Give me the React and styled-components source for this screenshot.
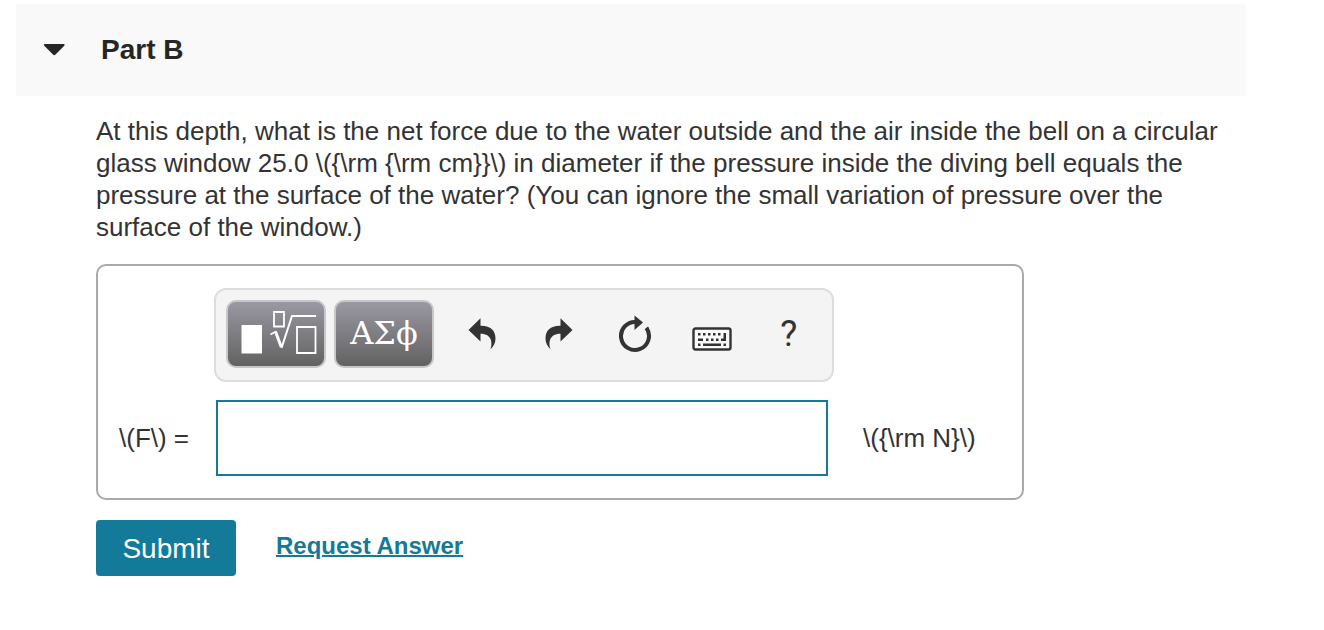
import { useId, useState } from "react";
import styled, { createGlobalStyle, css } from "styled-components";

const GlobalStyle = createGlobalStyle`
  *, *::before, *::after {
    box-sizing: border-box;
  }

  body {
    margin: 0;
    background: #fff;
    color: #333;
    font-family: "Liberation Sans", Helvetica, Arial, sans-serif;
    font-size: 26px;
    line-height: 32px;
  }

  button, input {
    font: inherit;
  }
`;

const UndoIcon = () => (
  <svg width="28" height="32" viewBox="0 0 28 32" aria-hidden="true">
    <path
      d="M0.5 12 12.5 0.3V7.8C22.5 7.5 27.5 12.5 27.5 20.5 27.5 25 25.5 28.5 22.5 31.3 24.5 25.5 24.3 15.8 12.5 15.8V23.5Z"
      fill="#333"
    />
  </svg>
);

const RedoIcon = () => (
  <svg width="28" height="32" viewBox="0 0 28 32" aria-hidden="true">
    <path
      d="M27.5 12 15.5 0.3V7.8C5.5 7.5 0.5 12.5 0.5 20.5 0.5 25 2.5 28.5 5.5 31.3 3.5 25.5 3.7 15.8 15.5 15.8V23.5Z"
      fill="#333"
    />
  </svg>
);

const ResetIcon = () => (
  <svg width="34" height="38" viewBox="0 0 34 38" aria-hidden="true">
    <path
      d="M18 7A14 14 0 1 0 28.5 13"
      fill="none"
      stroke="#333"
      strokeWidth="4"
    />
    <path d="M16.5 0.5 25 7.5 16.5 15ZM26.5 14.5 30 11.5 31 15Z" fill="#333" />
  </svg>
);

const KeyboardIcon = () => (
  <svg width="40" height="34" viewBox="0 -10 40 34" aria-hidden="true">
    <rect
      x="1.5"
      y="1.5"
      width="37"
      height="21"
      rx="2"
      fill="#fafafa"
      stroke="#333"
      strokeWidth="2.4"
    />
    <path
      d="M6 6h2.5v2.5H6zM11 6h2.5v2.5H11zM16 6h2.5v2.5H16zM21 6h2.5v2.5H21zM26 6h2.5v2.5H26zM31.5 6H34v8h-5v-2.5h2.500zM6 11.5h5V14H6zM14 11.5h2.5V14H14zM19 11.5h2.5V14H19zM24 11.5h2.5V14H24zM6 16.5h2.5V19H6zM11 16.5h18V19H11zM31.5 16.5H34V19h-2.5z"
      fill="#333"
    />
  </svg>
);

const TemplatesIcon = () => (
  <svg width="76" height="44" viewBox="0 0 76 44" aria-hidden="true">
    <path d="M3.5 14H24V42.500H3.500z" fill="#fff" />
    <g fill="none" stroke="#fff">
      <path d="M36 1h10v14.500H36zM59 16h18.500V42H59z" strokeWidth="1.800" />
      <path d="M43.500 37 54 5H78" strokeWidth="2" />
      <path d="M32.500 23.500 38 20.500" strokeWidth="1.800" />
      <path d="M37.500 20.500 43.300 36" strokeWidth="3" />
    </g>
  </svg>
);

const Page = styled.main`
  padding: 4px 78px 40px 16px;
`;

const PartHeader = styled.header`
  display: flex;
  align-items: center;
  height: 92px;
  padding: 0 26px;
  background: #f9f9f9;
`;

const PartToggle = styled.button`
  display: flex;
  align-items: center;
  gap: 35px;
  padding: 0;
  border: 0;
  background: none;
  color: #262626;
  font-size: 28px;
  font-weight: 700;
  cursor: pointer;
`;

const PartTitle = styled.h2`
  margin: 0;
  font: inherit;
`;

const Arrow = styled.svg`
  transform: rotate(${({ $open }) => ($open ? "0" : "-90deg")});
`;

const PartBody = styled.section`
  padding: 19px 0 0 80px;
`;

const Question = styled.p`
  margin: 0 0 21px;
`;

const AnswerBox = styled.div`
  display: grid;
  grid-template-columns: 95px minmax(0, 620px) auto;
  row-gap: 18px;
  align-items: center;
  width: fit-content;
  padding: 22px 46px 22px 21px;
  border: 2px solid #a9a9a9;
  border-radius: 10px;
`;

const Toolbar = styled.div`
  grid-column: 2;
  display: flex;
  gap: 8px;
  padding: 10px 4px 12px 10px;
  border: 2px solid #ddd;
  border-radius: 12px;
  background: #f4f4f4;
`;

const toolButton = css`
  display: flex;
  align-items: center;
  justify-content: center;
  height: 68px;
  padding: 0;
  cursor: pointer;
`;

const PaletteButton = styled.button`
  ${toolButton}

  width: 100px;
  padding-bottom: 2px;
  border: 2px solid #c8c8c8;
  border-radius: 10px;
  background: linear-gradient(#9a98a2, #626262);
  color: #fff;
  font-family: "DejaVu Serif", serif;
  font-size: 32px;

  svg {
    overflow: visible;
  }
`;

const IconGroup = styled.div`
  flex: 1;
  display: flex;
  padding: 0 1px 0 2px;
`;

const IconButton = styled.button`
  ${toolButton}

  flex: 1;
  border: 0;
  background: none;
  color: #333;
  font-family: Roboto, sans-serif;
  font-size: 36px;
`;

const AnswerLabel = styled.label`
  grid-column: 1;
`;

const AnswerInput = styled.input`
  width: 612px;
  max-width: 100%;
  height: 76px;
  margin-left: 2px;
  padding: 0 16px;
  border: 2px solid #147a99;
  border-radius: 0;
  background: #fff;
  color: #333;
  outline: none;
`;

const Unit = styled.span`
  padding-left: 29px;
`;

const Actions = styled.div`
  display: flex;
  align-items: center;
  gap: 40px;
  margin-top: 20px;
`;

const SubmitButton = styled.button`
  width: 140px;
  height: 56px;
  padding: 2px 0 0;
  border: 0;
  border-radius: 4px;
  background: #147a99;
  color: #fff;
  font-size: 28px;
  cursor: pointer;
`;

const RequestLink = styled.a`
  padding-bottom: 4px;
  color: #147a99;
  font-size: 24px;
  line-height: 28px;
  font-weight: 700;
  text-decoration: underline;
  text-decoration-thickness: 2px;
`;

const tools = [
  { title: "Undo", icon: <UndoIcon /> },
  { title: "Redo", icon: <RedoIcon /> },
  { title: "Reset", icon: <ResetIcon /> },
  { title: "Keyboard shortcuts", icon: <KeyboardIcon /> },
  { title: "Help", icon: "?" },
];

const AnswerForm = () => {
  const id = useId();
  const [answer, setAnswer] = useState("");

  return (
    <form onSubmit={(e) => e.preventDefault()}>
      <AnswerBox>
        <Toolbar role="toolbar">
          <PaletteButton type="button" aria-label="Templates">
            <TemplatesIcon />
          </PaletteButton>
          <PaletteButton type="button">ΑΣϕ</PaletteButton>
          <IconGroup>
            {tools.map(({ title, icon }) => (
              <IconButton key={title} type="button" aria-label={title}>
                {icon}
              </IconButton>
            ))}
          </IconGroup>
        </Toolbar>
        <AnswerLabel htmlFor={id}>{"\\(F\\) ="}</AnswerLabel>
        <AnswerInput
          id={id}
          value={answer}
          onChange={(e) => setAnswer(e.target.value)}
        />
        <Unit>{"\\({\\rm N}\\)"}</Unit>
      </AnswerBox>
      <Actions>
        <SubmitButton type="submit">Submit</SubmitButton>
        <RequestLink href="#answer">Request Answer</RequestLink>
      </Actions>
    </form>
  );
};

const App = () => {
  const [isOpen, setIsOpen] = useState(true);

  return (
    <>
      <GlobalStyle />
      <Page>
        <PartHeader>
          <PartToggle
            type="button"
            aria-expanded={isOpen}
            onClick={() => setIsOpen(!isOpen)}
          >
            <Arrow $open={isOpen} width="24" height="14" viewBox="0 0 24 14">
              <path
                d="M3 1H21.5Q23.5 1 22 3L13.5 11.5Q12.3 13 11 11.5L2.5 3Q1 1 3 1Z"
                fill="#262626"
              />
            </Arrow>
            <PartTitle>Part B</PartTitle>
          </PartToggle>
        </PartHeader>
        {isOpen && (
          <PartBody>
            <Question>
              {
                "At this depth, what is the net force due to the water outside and the air inside the bell on a circular glass window 25.0 \\({\\rm {\\rm cm}}\\) in diameter if the pressure inside the diving bell equals the pressure at the surface of the water? (You can ignore the small variation of pressure over the surface of the window.)"
              }
            </Question>
            <AnswerForm />
          </PartBody>
        )}
      </Page>
    </>
  );
};

export default App;
